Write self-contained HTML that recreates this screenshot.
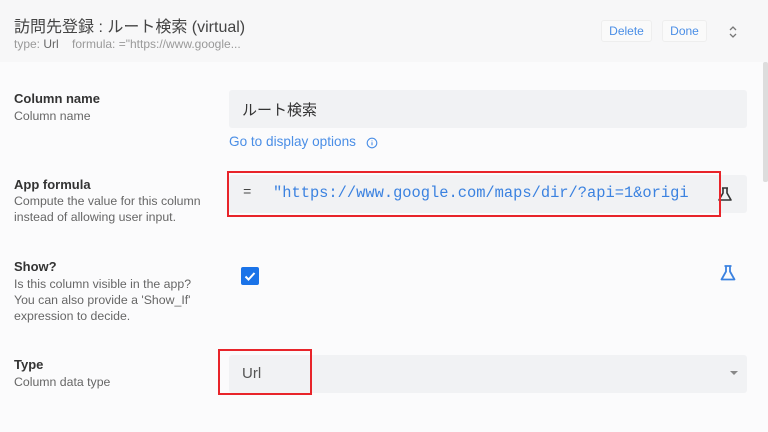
<!DOCTYPE html>
<html><head><meta charset="utf-8"><style>
*{margin:0;padding:0;box-sizing:border-box}
body{width:768px;height:432px;overflow:hidden;background:#fbfbfc;font-family:"Liberation Sans","Noto Sans CJK JP",sans-serif;position:relative}
.a{position:absolute;white-space:nowrap}
.hdr{position:absolute;left:0;top:0;width:768px;height:62px;background:#f7f7f8}
.lbl{font-size:13px;font-weight:bold;color:#333}
.d{font-size:12.3px;color:#666;line-height:16px}
.box{position:absolute;left:229px;width:518px;height:38px;background:#f1f2f4;border-radius:3px}
.btn{position:absolute;top:20px;height:22px;border:1px solid #eee;background:#fafafa;border-radius:3px;color:#4a8ee6;font-size:12px;text-align:center;line-height:20px}
.red{position:absolute;border:2px solid #e8242a}
</style></head><body>
<div class="hdr"></div>
<div class="a" style="left:14px;top:13px;font-size:16px;color:#444">訪問先登録 : ルート検索 (virtual)</div>
<div class="a" style="left:14px;top:37px;font-size:12px;color:#999">type: <span style="color:#666">Url</span> &nbsp;&nbsp; formula: ="https://www.google...</div>
<div class="btn" style="left:601px;width:51px">Delete</div>
<div class="btn" style="left:662px;width:45px">Done</div>
<svg class="a" style="left:728px;top:24px" width="10" height="16" viewBox="0 0 10 16"><path d="M2 6l3-3 3 3M2 10l3 3 3-3" stroke="#777" stroke-width="1.3" fill="none"/></svg>
<div class="a" style="left:763px;top:62px;width:5px;height:120px;background:#ddd;border-radius:2px"></div>

<div class="a lbl" style="left:14px;top:91px">Column name</div>
<div class="a d" style="left:14px;top:108px">Column name</div>
<div class="box" style="top:90px"></div>
<div class="a" style="left:242px;top:99px;font-size:15px;color:#333">ルート検索</div>
<div class="a" style="left:229px;top:134px;font-size:13.6px;color:#4a8ee6">Go to display options</div>
<svg class="a" style="left:366px;top:137px" width="12" height="12" viewBox="0 0 12 12"><circle cx="6" cy="6" r="4.8" stroke="#4a8ee6" stroke-width="1.1" fill="none"/><path d="M6 5.3v3M6 3.5v.8" stroke="#4a8ee6" stroke-width="1.1"/></svg>

<div class="a lbl" style="left:14px;top:177px">App formula</div>
<div class="a d" style="left:14px;top:193px">Compute the value for this column<br>instead of allowing user input.</div>
<div class="box" style="top:175px"></div>
<div class="a" style="left:243px;top:185px;font-size:14px;color:#444;font-family:'Liberation Mono',monospace">=</div>
<div class="a" style="left:273px;top:184px;font-size:15.4px;color:#3b82e0;font-family:'Liberation Mono',monospace">"https://www.google.com/maps/dir/?api=1&amp;origi</div>
<svg class="a" style="left:717px;top:186px" width="16" height="16" viewBox="0 0 16 16"><path d="M5 2h6M6 2v5l-4 7h12l-4-7V2" stroke="#333" stroke-width="1.6" fill="none" stroke-linejoin="round"/></svg>
<div class="red" style="left:227px;top:171px;width:494px;height:46px"></div>

<div class="a lbl" style="left:14px;top:259px">Show?</div>
<div class="a d" style="left:14px;top:276px">Is this column visible in the app?<br>You can also provide a 'Show_If'<br>expression to decide.</div>
<div class="a" style="left:241px;top:267px;width:18px;height:18px;background:#1a73e8;border-radius:2px"></div>
<svg class="a" style="left:241px;top:267px" width="18" height="18" viewBox="0 0 18 18"><path d="M4.5 9.5l3 3 6-6.5" stroke="#fff" stroke-width="2" fill="none"/></svg>
<svg class="a" style="left:719px;top:264px" width="18" height="18" viewBox="0 0 18 18"><path d="M5.5 2h7M7 2v5.5l-4.5 8h13l-4.5-8V2" stroke="#3b82e0" stroke-width="1.8" fill="none" stroke-linejoin="round"/></svg>

<div class="a lbl" style="left:14px;top:357px">Type</div>
<div class="a d" style="left:14px;top:374px">Column data type</div>
<div class="box" style="top:355px"></div>
<div class="a" style="left:242px;top:365px;font-size:15px;color:#555">Url</div>
<svg class="a" style="left:729px;top:370px" width="10" height="6" viewBox="0 0 10 6"><path d="M1 1h8L5 5z" fill="#888"/></svg>
<div class="red" style="left:218px;top:349px;width:94px;height:46px"></div>
</body></html>
